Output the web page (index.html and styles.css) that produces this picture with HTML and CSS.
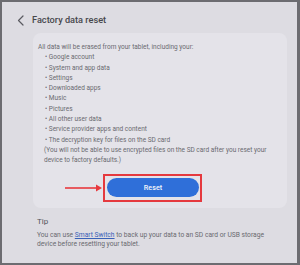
FILE: index.html
```html
<!DOCTYPE html>
<html>
<head>
<meta charset="utf-8">
<link rel="stylesheet" href="styles.css">
</head>
<body>
<div class="screen">
  <div class="header">
    <svg class="back" width="7" height="11" viewBox="0 0 7 11"><polyline points="6,1 1.5,5.5 6,10" fill="none" stroke="#5a5a60" stroke-width="1.2" stroke-linecap="round" stroke-linejoin="round"/></svg>
    <h1 class="title">Factory data reset</h1>
  </div>
  <div class="card">
    <p class="intro">All data will be erased from your tablet, including your:</p>
    <ul class="bullets">
      <li>• Google account</li>
      <li>• System and app data</li>
      <li>• Settings</li>
      <li>• Downloaded apps</li>
      <li>• Music</li>
      <li>• Pictures</li>
      <li>• All other user data</li>
      <li>• Service provider apps and content</li>
      <li>• The decryption key for files on the SD card</li>
    </ul>
    <p class="note">(You will not be able to use encrypted files on the SD card after you reset your device to factory defaults.)</p>
    <div class="action">
      <svg class="arrow" width="37" height="8" viewBox="0 0 37 8"><line x1="0" y1="4" x2="32" y2="4" stroke="#e8393e" stroke-width="1.6"/><polygon points="31,0.5 37,4 31,7.5" fill="#e8393e"/></svg>
      <div class="highlight">
        <button class="reset">Reset</button>
      </div>
    </div>
  </div>
  <div class="tip">
    <h2 class="tip-title">Tip</h2>
    <p class="tip-text"><span class="tip-line">You can use <a class="link">Smart Switch</a> to back up your data to an SD card or USB storage</span><span class="tip-line">device before resetting your tablet.</span></p>
  </div>
</div>
</body>
</html>
```
FILE: styles.css
```css
html, body {
  margin: 0;
  padding: 0;
}
body {
  width: 300px;
  height: 265px;
  overflow: hidden;
  font-family: "Roboto", "Liberation Sans", sans-serif;
}
.screen {
  box-sizing: border-box;
  width: 300px;
  height: 265px;
  background: #dddce2;
  border-style: solid;
  border-color: #6c6c71;
  border-width: 2px 3px 2px 2px;
}
.header {
  display: flex;
  align-items: center;
  padding: 12px 0 0 15px;
  height: 12px;
}
.back {
  display: block;
}
.title {
  margin: 0 0 0 8px;
  font-size: 9.2px;
  font-weight: 500;
  line-height: 12px;
  color: #47474c;
}
.card {
  margin: 7px 10px 0 31px;
  background: #e4e3e9;
  border-radius: 8px;
  padding: 9px 0 6px 5px;
  color: #6a6a70;
  font-size: 6.5px;
  line-height: 10.3px;
}
.intro {
  margin: 0;
}
.bullets {
  list-style: none;
  margin: 0;
  padding: 0 0 0 7px;
}
.note {
  margin: 0;
  padding-left: 6px;
  width: 226px;
}
.action {
  display: flex;
  align-items: center;
  margin: 8px 0 0 27px;
}
.arrow {
  display: block;
  margin-right: 1px;
}
.highlight {
  border: 2px solid #e5393e;
  padding: 2px 1px 3px 2px;
}
.reset {
  display: block;
  width: 92px;
  height: 19px;
  border: none;
  border-radius: 10px;
  background: #2f6fd9;
  color: #f4f6fb;
  font-family: "Roboto", "Liberation Sans", sans-serif;
  font-size: 7.2px;
  font-weight: 500;
  padding: 0;
}
.tip {
  margin: 9px 0 0 35px;
  color: #6a6a70;
}
.tip-title {
  margin: 0;
  font-size: 8px;
  font-weight: 400;
  line-height: 10px;
  color: #55555a;
}
.tip-text {
  display: flex;
  flex-direction: column;
  margin: 4px 0 0;
  font-size: 6.7px;
  line-height: 9.5px;
}
.tip-line {
  white-space: nowrap;
}
.link {
  color: #3a62b8;
  text-decoration: underline;
}
```
